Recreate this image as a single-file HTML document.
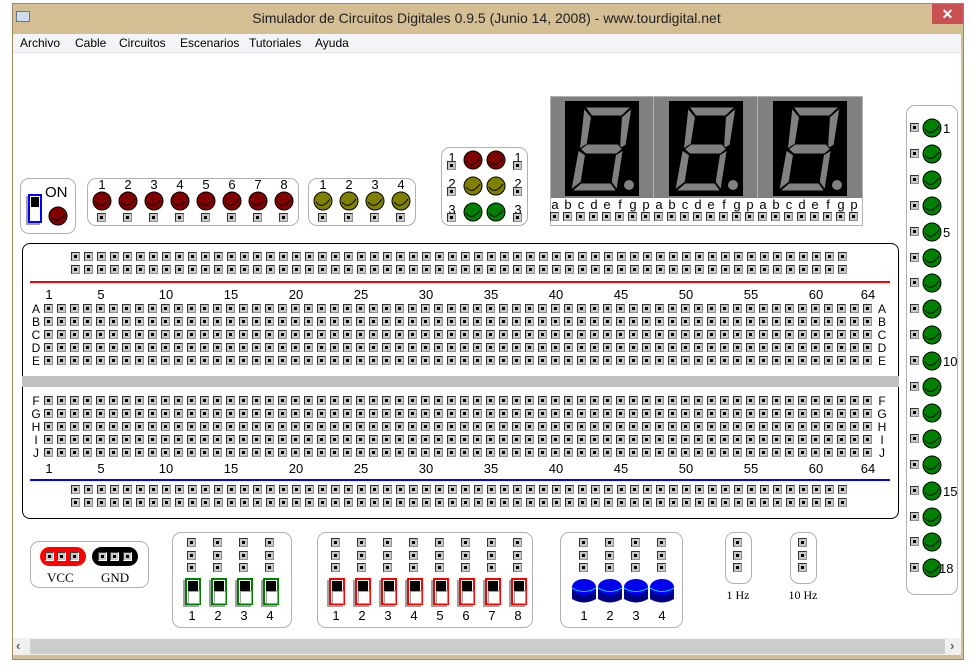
<!DOCTYPE html>
<html><head><meta charset="utf-8">
<style>
*{margin:0;padding:0;box-sizing:border-box}
body{width:973px;height:667px;position:relative;overflow:hidden;background:#fff;font-family:"Liberation Sans",sans-serif}
.a{position:absolute}
.p{position:absolute;width:9px;height:9px;border:1px solid;border-color:#303030 #909090 #909090 #303030;background:linear-gradient(#000,#000) center/3px 3px no-repeat,#c8c8c8}
.t{position:absolute;font-size:12px;color:#000;line-height:12px;text-align:center;width:20px}
.box{position:absolute;border:1px solid #b0b0b0;border-radius:9px;background:#fff}
.sw{position:absolute;width:16px;height:27px;border:2px solid;box-shadow:-2px 2px 0 #a0a0a0;background:#fff}
.sw:before{content:"";position:absolute;left:1px;top:1px;width:10px;height:10px;background:#000}
.sw:after{content:"";position:absolute;left:1px;top:11px;width:10px;height:11px;border:1px solid #a0a0a0;background:#fff}
</style></head><body>
<div class="a" style="left:12px;top:3px;width:952px;height:657px;background:#d4bf94;border:1px solid #a08a60"></div>
<div class="a" style="left:0;top:0;width:12px;height:667px;background:#fff"></div>
<div class="a" style="left:932px;top:4px;width:31px;height:20px;background:#c75050;color:#fff;font-size:14px;text-align:center;line-height:20px;font-weight:bold">✕</div>
<div class="a" style="left:16px;top:11px;width:14px;height:11px;background:#cde;border:1px solid #678"></div>
<div class="a" style="left:0;top:10px;width:973px;text-align:center;font-size:14px;color:#222">Simulador de Circuitos Digitales 0.9.5 (Junio 14, 2008) - www.tourdigital.net</div>
<div class="a" style="left:13px;top:34px;width:948px;height:19px;background:#f3f4f7;border-bottom:1px solid #e4e6ea;font-size:12px;line-height:19px;color:#000">
<span class="a" style="left:7px">Archivo</span><span class="a" style="left:62px">Cable</span><span class="a" style="left:106px">Circuitos</span><span class="a" style="left:167px">Escenarios</span><span class="a" style="left:236px">Tutoriales</span><span class="a" style="left:302px">Ayuda</span></div>
<div class="a" style="left:13px;top:53px;width:948px;height:585px;background:#fff"></div>
<div class="a" style="left:13px;top:638px;width:948px;height:17px;background:#f0f0f0"></div>
<div class="a" style="left:30px;top:639px;width:915px;height:15px;background:#cdcdcd"></div>
<div class="a" style="left:16px;top:638px;font-size:13px;color:#606060;font-weight:bold">‹</div>
<div class="a" style="left:950px;top:638px;font-size:13px;color:#606060;font-weight:bold">›</div>
<div class="a" style="left:22px;top:243px;width:877px;height:134px;border:1px solid #000;border-bottom:none;border-radius:8px 8px 0 0"></div>
<div class="a" style="left:22px;top:386px;width:877px;height:133px;border:1px solid #000;border-top:none;border-radius:0 0 8px 8px"></div>
<div class="a" style="left:22px;top:376px;width:877px;height:11px;background:#c0c0c0"></div>
<div class="a" style="left:30px;top:281px;width:860px;height:2px;background:#f00"></div>
<div class="a" style="left:30px;top:479px;width:860px;height:2px;background:#00f"></div>
<div id="g"></div>
<script>
var g=document.getElementById('g'),h='';
function P(x,y){h+='<div class="p" style="left:'+(x-5)+'px;top:'+(y-5)+'px"></div>';}
function T(s,x,y,st){h+='<div class="t" style="left:'+(x-10)+'px;top:'+(y-6)+'px;'+(st||'')+'">'+s+'</div>';}
function LED(x,y,c,w,hh){w=w||18;hh=hh||18;h+='<svg class="a" style="left:'+(x-w/2-1)+'px;top:'+(y-hh/2-1)+'px" width="'+(w+2)+'" height="'+(hh+2)+'"><ellipse cx="'+(w/2+1)+'" cy="'+(hh/2+1)+'" rx="'+(w/2)+'" ry="'+(hh/2)+'" fill="'+c+'" stroke="#000"/><path d="M3 '+(hh/2+2)+' Q'+(w/2)+' '+(hh+1)+' '+(w-1)+' '+(hh/2-1)+'" fill="none" stroke="#000" stroke-width="1"/></svg>';}
[257,270,490,503].forEach(function(y){for(var i=0;i<60;i++)P(76+i*13,y);});
var rows=[['A',309],['B',322],['C',335],['D',348],['E',361],['F',401],['G',414],['H',427],['I',440],['J',453]];
rows.forEach(function(r){for(var c=0;c<64;c++)P(49+c*13,r[1]);T(r[0],36,r[1]);T(r[0],882,r[1]);});
[1,5,10,15,20,25,30,35,40,45,50,55,60,64].forEach(function(n){var x=49+(n-1)*13;T(n,x,295,'font-size:13px');T(n,x,469,'font-size:13px');});
h+='<div class="box" style="left:20px;top:178px;width:56px;height:56px"></div>';
h+='<div class="a" style="left:28px;top:194px;width:14px;height:29px;border:2px solid #00f;background:#fff;box-shadow:-2px 2px 0 #a0a0a0"></div><div class="a" style="left:31px;top:197px;width:8px;height:10px;background:#000"></div>';
h+='<div class="a" style="left:45px;top:184px;font-size:15px">ON</div>';
LED(58,216,'#800000');
h+='<div class="box" style="left:87px;top:178px;width:212px;height:48px"></div>';
for(var i=0;i<8;i++){var x=102+i*26;T(i+1,x,185,'font-size:13px');LED(x,201,'#800000');P(x,218);}
h+='<div class="box" style="left:308px;top:178px;width:108px;height:48px"></div>';
for(var i=0;i<4;i++){var x=323+i*26;T(i+1,x,185,'font-size:13px');LED(x,201,'#808000');P(x,218);}
h+='<div class="box" style="left:441px;top:147px;width:87px;height:79px"></div>';
var tc=['#800000','#808000','#008000'];
for(var i=0;i<3;i++){var y=160+i*26;T(i+1,452,y-2,'font-size:13px');P(452,y+6);T(i+1,518,y-2,'font-size:13px');P(518,y+6);LED(473,y,tc[i]);LED(496,y,tc[i]);}
h+='<div class="a" style="left:550px;top:96px;width:313px;height:130px;border:1px solid #b0b0b0;background:#fff"></div>';
h+='<div class="a" style="left:551px;top:97px;width:311px;height:101px;background:#808080"></div>';
var L='abcdefgp';
for(var d=0;d<3;d++){var bx=565+d*104;
if(d<2)h+='<div class="a" style="left:'+(653+d*104)+'px;top:97px;width:1px;height:101px;background:#b0b0b0"></div>';
h+='<svg class="a" style="left:'+bx+'px;top:101px" width="74" height="95"><rect width="74" height="95" fill="#000"/><g fill="#808080" stroke="#000" stroke-width="1" transform="translate(9,0) skewX(-9)"><polygon points="12,6 58,6 50,15 20,15"/><polygon points="59,7 59,44 53,48 50,16"/><polygon points="11,7 20,16 20,43 13,48"/><polygon points="14,48 20,43 51,43 56,48 51,53 20,53"/><polygon points="12,49 20,54 20,81 11,89"/><polygon points="57,49 57,89 50,81 50,54"/><polygon points="20,82 50,82 57,90 12,90"/></g><circle cx="64" cy="84" r="5" fill="#808080"/></svg>';}
for(var i=0;i<24;i++){var x=555+i*13;T(L[i%8],x,205,'font-size:13px');P(x,217);}
h+='<div class="box" style="left:906px;top:105px;width:52px;height:490px"></div>';
for(var i=0;i<18;i++){var y=128+i*25.9;P(915,y);LED(932,y,'#008000',18,18);if(i==0||i==4||i==9||i==14||i==17)h+='<div class="a" style="left:'+(i==17?939:943)+'px;top:'+(y-7)+'px;font-size:13px">'+(i+1)+'</div>';}
h+='<div class="box" style="left:30px;top:541px;width:119px;height:47px"></div>';
h+='<div class="a" style="left:40px;top:547px;width:46px;height:19px;background:#f00;border-radius:10px"></div><div class="a" style="left:92px;top:547px;width:46px;height:19px;background:#000;border-radius:10px"></div>';
[50,62,75,103,115,128].forEach(function(x){h+='<div class="p" style="left:'+(x-5)+'px;top:552px;border-color:#404040 #fff #fff #404040"></div>';});
h+='<div class="a" style="left:47px;top:570px;font-family:Liberation Serif,serif;font-size:13px">VCC</div><div class="a" style="left:101px;top:570px;font-family:Liberation Serif,serif;font-size:13px">GND</div>';
function SW(x0,n,col,bl,bw){h+='<div class="box" style="left:'+bl+'px;top:532px;width:'+bw+'px;height:96px"></div>';
for(var i=0;i<n;i++){var x=x0+i*26;P(x,543);P(x,556);P(x,568);h+='<div class="sw" style="left:'+(x-7)+'px;top:578px;border-color:'+col+'"></div>';T(i+1,x,616,'font-size:13px');}}
SW(192,4,'#008000',172,120);
SW(336,8,'#f00',317,216);
h+='<div class="box" style="left:560px;top:532px;width:123px;height:96px"></div>';
for(var i=0;i<4;i++){var x=584+i*26;P(x,543);P(x,556);P(x,568);
h+='<svg class="a" style="left:'+(x-13)+'px;top:578px" width="26" height="27"><path d="M1 9 V21 Q13 28 25 21 V9 Z" fill="#000080"/><ellipse cx="13" cy="9" rx="12" ry="8" fill="#0000f0"/><path d="M1 10 Q13 17 25 10" fill="none" stroke="#00e0ff"/></svg>';T(i+1,x,616,'font-size:13px');}
[[738,725,'1 Hz'],[803,790,'10 Hz']].forEach(function(c){h+='<div class="box" style="left:'+c[1]+'px;top:532px;width:27px;height:52px"></div>';P(c[0],543);P(c[0],556);P(c[0],568);
h+='<div class="a" style="left:'+(c[0]-30)+'px;top:588px;width:60px;text-align:center;font-family:Liberation Serif,serif;font-size:12px">'+c[2]+'</div>';});
g.innerHTML=h;
</script>
</body></html>
